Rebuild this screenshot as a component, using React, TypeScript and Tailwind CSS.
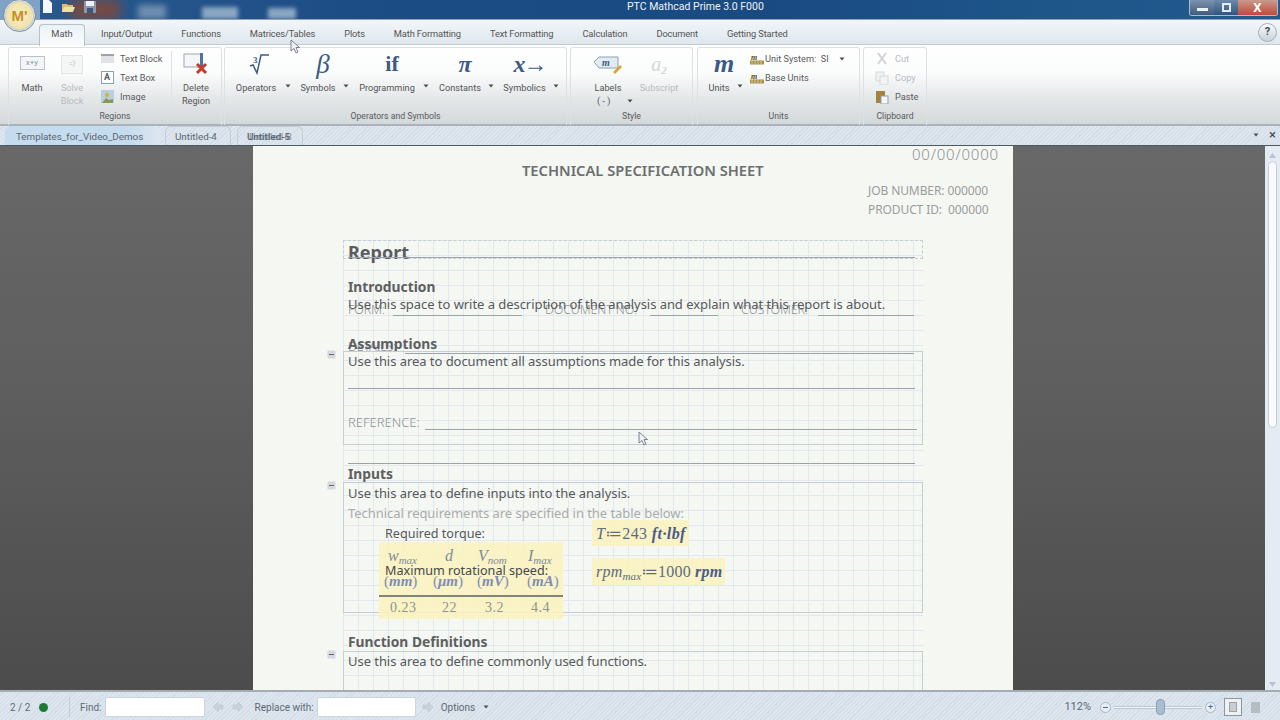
import React from "react";

const ui = "font-['Roboto','Liberation_Sans',sans-serif]";
const sheet = "font-['Noto_Sans','Open_Sans',sans-serif]";
const math = "font-['Liberation_Serif','DejaVu_Serif',serif]";
const hatch =
  "bg-[repeating-linear-gradient(135deg,#dde6ef_0px,#dde6ef_2px,#d3dde8_2px,#d3dde8_3px)]";

function Caret({ className = "" }: { className?: string }) {
  return (
    <svg width="6" height="4" viewBox="0 0 6 4" className={className}>
      <path d="M0.5 0.5h5L3 3.5z" fill="#4d4d4d" />
    </svg>
  );
}

function Group({ w, label, children, mr = "mr-[3px]" }: { w: string; label: string; children: React.ReactNode; mr?: string }) {
  return (
    <div className={`${w} ${mr} shrink-0 h-[78px] flex flex-col rounded-t-[3px] border border-b-0 border-[#dde1e4]`}>
      <div className="h-[58px] flex items-start">{children}</div>
      <div className="flex-1 flex items-center justify-center text-[8.7px] text-[#5a5a5a] pt-[2px]">{label}</div>
    </div>
  );
}

function Big({
  w,
  icon,
  label,
  faded,
}: {
  w: string;
  icon: React.ReactNode;
  label: string;
  faded?: boolean;
}) {
  return (
    <div className={`${w} shrink-0 flex flex-col items-center`}>
      <div className="h-[28px] mt-[2px] flex items-center justify-center">{icon}</div>
      <div className={`mt-[3px] text-[9.2px] leading-[13px] text-center flex items-center whitespace-pre-line ${faded ? "text-[#b9bcbd]" : "text-[#555]"}`}>
        {label}
      </div>
    </div>
  );
}

function Sm({ icon, label, faded }: { icon: React.ReactNode; label: string; faded?: boolean }) {
  return (
    <div className="h-[19px] flex items-center gap-[6px]">
      <span className="w-[14px] h-[14px] flex items-center justify-center">{icon}</span>
      <span className={`text-[9.2px] ${faded ? "text-[#b9bcbd]" : "text-[#5b5b5b]"}`}>{label}</span>
    </div>
  );
}

function Glyph({ children, cls }: { children: React.ReactNode; cls?: string }) {
  return <span className={`${math} italic font-bold text-[24px] leading-none text-[#3c5a86] ml-[10px] ${cls ?? ""}`}>{children}</span>;
}

function Slot({ w }: { w: string }) {
  return <div className={`${w} shrink-0 h-[14px] mt-[31px] flex items-center justify-center`}><Caret /></div>;
}

function UnitIcon() {
  return (
    <svg width="14" height="12" viewBox="0 0 14 12">
      <text x="1" y="7" fontSize="8" fontStyle="italic" fontWeight="700" fill="#5a4a20" fontFamily="Liberation Serif">m</text>
      <rect x="0" y="7.500" width="14" height="4" fill="#a8904e" />
      <path d="M2 8v3M5 8v3M8 8v3M11 8v3" stroke="#e4d6a4" strokeWidth="0.8" />
    </svg>
  );
}

function Arrow({ dir = "r", color = "#c9d2da" }: { dir?: "l" | "r"; color?: string }) {
  return (
    <svg width="12" height="12" viewBox="0 0 12 12">
      <path
        d={dir === "r" ? "M1 4h5V1l5 5-5 5V8H1z" : "M11 4H6V1L1 6l5 5V8h5z"}
        fill={color}
        stroke="#bcc6cf"
        strokeWidth="0.6"
      />
    </svg>
  );
}

function Cursor() {
  return (
    <svg width="10" height="15" viewBox="0 0 10 15">
      <path d="M1 1v11l3-2.500 2 4.500 2-1-2-4.500h3.500z" fill="#eef2f5" stroke="#667" strokeWidth="0.8" />
    </svg>
  );
}

function Rule({ x, y, w }: { x: number; y: number; w: number }) {
  return <div className="absolute h-px bg-[#98a3ab]" style={{ left: x, top: y, width: w }} />;
}

function T({ x, y, cls, children }: { x: number; y: number; cls: string; children: React.ReactNode }) {
  return (
    <div className={`absolute whitespace-nowrap leading-none ${cls}`} style={{ left: x, top: y }}>
      {children}
    </div>
  );
}

function Box({ x, y, w, h }: { x: number; y: number; w: number; h: number }) {
  return <div className="absolute border border-[#c5ced5]" style={{ left: x, top: y, width: w, height: h }} />;
}

function Fold({ y }: { y: number }) {
  return (
    <div
      className="absolute w-[9px] h-[9px] rounded-[2px] bg-[#d3d9dc] border border-[#e3e7ea] flex items-center justify-center"
      style={{ left: 327, top: y - 1 }}
    >
      <div className="w-[5px] h-px bg-[#666]" />
    </div>
  );
}

const body = "text-[13px] tracking-[-0.05px] text-[#56595a]";
const faint = "text-[12.500px] font-light tracking-[-0.15px] text-[#8f9293]";
const head = "text-[13.800px] font-bold text-[#5d6061]";

export default function App() {
  return (
    <div className={`relative w-[1280px] h-[720px] overflow-hidden flex flex-col bg-[#666] ${ui}`}>
      {/* Title bar */}
      <div className="relative h-[19px] shrink-0 overflow-hidden bg-[linear-gradient(90deg,#2a5a8f_0%,#1c4c84_30%,#1a4a82_60%,#1d5589_80%,#235a8f_100%)]">
        <div className="absolute left-[70px] top-0 w-[50px] h-[19px] bg-[#7b4a3e] blur-[6px]" />
        <div className="absolute left-[138px] top-[5px] w-[28px] h-[14px] bg-[#6f8fb0] blur-[3px]" />
        <div className="absolute left-[202px] top-[7px] w-[36px] h-[12px] bg-[#8aa7c3] blur-[2px]" />
        <div className="absolute left-[268px] top-[8px] w-[28px] h-[11px] bg-[#8aa7c3] blur-[2px]" />
        <div className="absolute left-0 top-0 w-[40px] h-[19px] bg-[#7ea3c6]" />
        <div className="absolute left-[627px] top-0 text-[10.5px] leading-[13px] text-[#eef3f8]">PTC Mathcad Prime 3.0 F000</div>
        <div className="absolute left-[42px] top-0 flex items-center gap-[9px]">
          <svg width="11" height="14" viewBox="0 0 11 14"><path d="M1 0h6l3 3v10H1z" fill="#f4f6f8" /></svg>
          <svg width="13" height="11" viewBox="0 0 13 11"><path d="M0 2h5l1 1h5v7H0z" fill="#d9bf74" /><path d="M2 5h11l-2 5H0z" fill="#efe0a6" /></svg>
          <svg width="12" height="12" viewBox="0 0 12 12"><rect width="12" height="12" rx="1" fill="#8a9ab0" /><rect x="2" y="0" width="8" height="5" fill="#eef1f4" /><rect x="3" y="7" width="6" height="5" fill="#41567a" /></svg>
        </div>
        <div className="absolute right-[2px] top-0 h-[16px] flex rounded-b-[3px] border border-t-0 border-[#a9bdd1] overflow-hidden">
          <div className="w-[24px] bg-[linear-gradient(#7c93ad,#3f5c7d)] flex items-center justify-center"><div className="w-[11px] h-[3px] mt-[3px] bg-[#eef2f6]" /></div>
          <div className="w-[24px] bg-[linear-gradient(#6d8aa8,#2f5680)] flex items-center justify-center">
            <div className="w-[9px] h-[9px] border-2 border-[#e5ebf1]" />
          </div>
          <div className="w-[39px] bg-[linear-gradient(#c99a8c,#c2483c)] flex items-center justify-center text-white text-[13px] font-bold leading-none">X</div>
        </div>
      </div>

      {/* Tab row */}
      <div className="relative h-[26px] shrink-0 pt-[3px] bg-[linear-gradient(#f2f6f9,#dfe7ed)] border-t border-[#93a3b1] border-b border-b-[#c3cbd1] flex items-center text-[9.300px] text-[#555]">
        <div className="absolute left-[39px] top-[4px] w-[46px] h-[22px] pb-[3px] rounded-t-[4px] border border-b-0 border-[#b6c2cb] bg-[linear-gradient(#eaf2f6,#fbfcfc)] flex items-center justify-center">Math</div>
        <div className="ml-[101px] flex gap-[29px] tracking-[-0.13px]">
          {["Input/Output", "Functions", "Matrices/Tables", "Plots", "Math Formatting", "Text Formatting", "Calculation", "Document", "Getting Started"].map((t) => (
            <span key={t}>{t}</span>
          ))}
        </div>
        <div className="ml-auto mr-[3px] mt-[-3px] w-[19px] h-[19px] rounded-full border border-[#a7b0b6] bg-[linear-gradient(#f8fafb,#c9d2d8)] flex items-center justify-center text-[11px] font-bold text-[#3d4a55]">?</div>
      </div>

      {/* Ribbon */}
      <div className="h-[81px] shrink-0 pt-[2px] pl-[8px] flex items-start bg-[linear-gradient(#ffffff_0%,#fbfcfc_35%,#e6e9ea_65%,#d3d8da_100%)] border-b-2 border-[#a9b3ba]">
        <Group w="w-[214px]" label="Regions" mr="mr-[2px]">
          <Big
            w="w-[46px]"
            label="Math"
            icon={
              <div className="w-[25px] h-[14px] mt-[-2px] border border-[#b6c1cc] bg-[#f3f6f8] text-[8px] text-[#8c97a1] flex items-center justify-center">x+y</div>
            }
          />
          <Big
            w="w-[34px]"
            faded
            label={"Solve\nBlock"}
            icon={<div className="w-[22px] h-[19px] border border-[#e1e5e7] bg-[#f5f6f6] text-[8px] text-[#c2c6c8] flex items-center justify-center">{"=}"}</div>}
          />
          <div className="ml-[11px] w-[71px] pt-[1px] flex flex-col">
            <Sm label="Text Block" icon={<div className="w-[13px] h-[9px] bg-[#dfe3e6] border-t-2 border-[#9aa4ac]" />} />
            <Sm label="Text Box" icon={<div className="w-[13px] h-[13px] border border-[#8da0b0] bg-white text-[9px] font-bold text-[#55606a] flex items-center justify-center leading-none">A</div>} />
            <Sm label="Image" icon={<svg width="13" height="13" viewBox="0 0 13 13"><rect width="13" height="13" fill="#b7cfe0" /><circle cx="6" cy="5" r="2.200" fill="#d7b04e" /><path d="M1 13l4-5 3 2 4-1v4z" fill="#879a55" /></svg>} />
          </div>
          <div className="w-px h-[52px] mt-[3px] bg-[#dfe3e5]" />
          <Big
            w="w-[48px]"
            label={"Delete\nRegion"}
            icon={
              <svg width="26" height="24" viewBox="0 0 26 24" className="mt-[-1px]">
                <rect x="1" y="2" width="17" height="13" fill="#f4f6f8" stroke="#9aa6b0" />
                <path d="M17 1h3v14h-3z" fill="#4b74a6" />
                <path d="M14 12l9 9M23 12l-9 9" stroke="#c8392b" strokeWidth="3" />
              </svg>
            }
          />
        </Group>

        <Group w="w-[343px]" label="Operators and Symbols">
          <div className="pl-[11px] flex items-start">
            <Big
              w="w-[40px]"
              label="Operators"
              icon={
                <svg width="24" height="22" viewBox="0 0 24 22" className="ml-[8px]">
                  <path d="M2 13l3-1 4 8 4-18h8" fill="none" stroke="#3c5a86" strokeWidth="1.500" />
                  <text x="5" y="10" fontSize="9" fontWeight="700" fill="#3c5a86" fontFamily="Liberation Serif">3</text>
                </svg>
              }
            />
            <Slot w="w-[24px]" />
            <Big w="w-[36px]" label="Symbols" icon={<Glyph cls="font-normal! text-[27px]">β</Glyph>} />
            <Slot w="w-[20px]" />
            <Big w="w-[62px]" label="Programming" icon={<span className={`${math} font-bold text-[22px] leading-none text-[#3c5a86] ml-[10px]`}>if</span>} />
            <Slot w="w-[16px]" />
            <Big w="w-[52px]" label="Constants" icon={<Glyph>π</Glyph>} />
            <Slot w="w-[10px]" />
            <Big w="w-[57px]" label="Symbolics" icon={<Glyph cls="text-[22px] tracking-[-2px]">x→</Glyph>} />
            <Slot w="w-[6px]" />
          </div>
        </Group>

        <Group w="w-[123px]" label="Style" mr="mr-[4px]">
          <div className="flex items-start pl-[12px]">
            <div className="w-[50px] shrink-0 flex flex-col items-center">
              <div className="h-[28px] mt-[2px] flex items-center">
                <svg width="30" height="22" viewBox="0 0 30 22" className="mt-[2px]">
                  <path d="M1 8l5-5h19v11H6z" fill="#e3eaf0" stroke="#8ba0b3" />
                  <text x="9" y="12" fontSize="10" fontStyle="italic" fontWeight="700" fill="#3c5a86" fontFamily="Liberation Serif">m</text>
                  <path d="M20 18l7-7 2 2-7 7z" fill="#d7a53a" />
                </svg>
              </div>
              <div className="mt-[3px] text-[9.200px] leading-[13px] text-[#555]">Labels</div>
              <div className="self-start ml-[14px] text-[9.200px] leading-[13px] text-[#555] flex items-center gap-[17px] whitespace-nowrap">( - )<Caret /></div>
            </div>
            <Big w="w-[52px]" faded label="Subscript" icon={<span className={`${math} italic text-[20px] leading-none text-[#d3d6d8]`}>a<sub className="text-[11px] font-bold">2</sub></span>} />
          </div>
        </Group>

        <Group w="w-[163px]" label="Units">
          <div className="flex items-start pl-[9px]">
            <Big w="w-[24px]" label="Units" icon={<Glyph cls="text-[26px]">m</Glyph>} />
            <Slot w="w-[18px]" />
            <div className="ml-[1px] w-[97px] pt-[1px] flex flex-col text-[9.200px] text-[#5b5b5b]">
              <div className="h-[19px] flex items-center gap-[1px]"><UnitIcon /><span>Unit System:&nbsp; SI</span><Caret className="ml-auto mr-[2px]" /></div>
              <div className="h-[19px] flex items-center gap-[1px]"><UnitIcon /><span>Base Units</span></div>
            </div>
          </div>
        </Group>

        <Group w="w-[64px]" label="Clipboard">
          <div className="pl-[11px] pt-[1px] flex flex-col">
            <Sm faded label="Cut" icon={<svg width="14" height="14" viewBox="0 0 14 14"><path d="M3 1l8 11M11 1L3 12" stroke="#cfd3d6" strokeWidth="2" /></svg>} />
            <Sm faded label="Copy" icon={<svg width="14" height="14" viewBox="0 0 14 14"><rect x="1" y="1" width="8" height="9" fill="#f2f3f4" stroke="#d5d8da" /><rect x="5" y="5" width="8" height="9" fill="#f2f3f4" stroke="#d5d8da" /></svg>} />
            <Sm label="Paste" icon={<svg width="14" height="14" viewBox="0 0 14 14"><rect x="1" y="1" width="9" height="12" fill="#a5823d" /><rect x="6" y="6" width="7" height="8" fill="#f5f6f7" stroke="#8da0b0" /></svg>} />
          </div>
        </Group>
      </div>

      {/* Document tab bar */}
      <div className={`h-[19px] shrink-0 relative text-[9.800px] leading-[12px] text-[#5b6670] ${hatch}`}>
        <div className="absolute left-[5px] top-0 w-[155px] h-[19px] rounded-t-[6px] bg-[linear-gradient(90deg,#c5dcee,#c5dcee_80%,#dde6ef)]" />
        <div className="absolute left-[165px] top-0 w-[66px] h-[19px] rounded-t-[6px] border border-b-0 border-[#c6ced5]" />
        <div className="absolute left-[237px] top-0 w-[66px] h-[19px] rounded-t-[6px] border border-b-0 border-[#c6ced5]" />
        <span className="absolute left-[16px] top-[5px]">Templates_for_Video_Demos</span>
        <span className="absolute left-[175px] top-[5px]">Untitled-4</span>
        <span className="absolute left-[247px] top-[5px] font-medium">Untitled-5</span>
        <span className="absolute left-[249px] top-[5px] font-medium opacity-50">Untitled-8</span>
        <Caret className="absolute right-[21px] top-[7px]" />
        <span className="absolute right-[4px] top-[1px] text-[13px] leading-[15px] text-[#444]">×</span>
      </div>

      {/* Work area */}
      <div className="flex-1 min-h-0 flex bg-[linear-gradient(#686868,#5e5e5e_45%,#4c4c4c)] border-t border-[#4d5a63]">
        <div className="flex-1 min-w-0 relative overflow-hidden">
          <div className="absolute left-[253px] top-0 w-[760px] h-[545px] bg-[#f5f7f3]">
            <div className="absolute left-[90px] top-[94px] w-[580px] h-[451px] bg-[linear-gradient(to_right,#e2e9ee_1px,transparent_1px),linear-gradient(to_bottom,#e2e9ee_1px,transparent_1px)] bg-[size:15px_15px]" />
          </div>
          <div className={`absolute inset-0 ${sheet}`}>
            <T x={522} y={17} cls="text-[14.700px] font-semibold text-[#6b6f70]">TECHNICAL SPECIFICATION SHEET</T>
            <T x={912} y={1} cls="text-[15px] font-light tracking-[0.8px] text-[#8d9091]">00/00/0000</T>
            <T x={868} y={39} cls="text-[12px] tracking-[-0.1px] text-[#9a9d9e]">JOB NUMBER: 000000</T>
            <T x={868} y={58} cls="text-[12px] tracking-[-0.1px] text-[#9a9d9e]">PRODUCT ID:&nbsp; 000000</T>

            <div className="absolute left-[343px] top-[94px] w-[580px] h-[19px] border border-dashed border-[#c5ced5]" />
            <T x={348} y={97} cls="text-[18px] font-bold text-[#5a5d5e]">Report</T>
            <Rule x={348} y={111} w={567} />

            <T x={348} y={134} cls={head}>Introduction</T>
            <T x={348} y={158} cls={faint}>FORM:</T>
            <Rule x={393} y={169} w={129} />
            <T x={545} y={158} cls={faint}>DOCUMENT NO:</T>
            <Rule x={650} y={169} w={68} />
            <T x={741} y={158} cls={faint}>CUSTOMER:</T>
            <Rule x={818} y={169} w={96} />
            <T x={348} y={152} cls={body}>Use this space to write a description of the analysis and explain what this report is about.</T>

            <T x={348} y={195} cls={faint}>DETAILS:</T>
            <T x={348} y={191} cls={head}>Assumptions</T>
            <Rule x={405} y={207} w={509} />
            <Fold y={205} />
            <Box x={343} y={205} w={580} h={94} />
            <T x={348} y={209} cls={body}>Use this area to document all assumptions made for this analysis.</T>
            <Rule x={348} y={242} w={567} />
            <T x={348} y={270} cls="text-[13px] font-light text-[#8f9293]">REFERENCE:</T>
            <Rule x={425} y={283} w={492} />
            <div className="absolute left-[638px] top-[285px]"><Cursor /></div>
            <Rule x={348} y={317} w={567} />

            <T x={348} y={321} cls={head}>Inputs</T>
            <Fold y={336} />
            <Box x={343} y={336} w={580} h={131} />
            <T x={348} y={341} cls={body}>Use this area to define inputs into the analysis.</T>
            <T x={348} y={361} cls="text-[13px] tracking-[-0.05px] text-[#a9acad]">Technical requirements are specified in the table below:</T>

            <div className="absolute left-[379px] top-[396px] w-[184px] h-[77px] bg-[#faf2c0]/90" />
            <div className="absolute left-[592px] top-[374px] w-[97px] h-[26px] bg-[#faf2c0]/90" />
            <div className="absolute left-[592px] top-[412px] w-[133px] h-[27px] bg-[#faf2c0]/90" />
            <T x={385} y={382} cls="text-[12.600px] text-[#56595a]">Required torque:</T>

            <div className={math}>
              <T x={388} y={402} cls="italic text-[16px] text-[#7d8a9c]">w<sub className="text-[11px]">max</sub></T>
              <T x={445} y={402} cls="italic text-[16px] text-[#7d8a9c]">d</T>
              <T x={478} y={402} cls="italic text-[16px] text-[#7d8a9c]">V<sub className="text-[11px]">nom</sub></T>
              <T x={528} y={402} cls="italic text-[16px] text-[#7d8a9c]">I<sub className="text-[11px]">max</sub></T>
              <T x={384} y={428} cls="italic font-bold text-[15px] text-[#7f8db5]"><span className="not-italic font-normal">(</span>mm<span className="not-italic font-normal">)</span></T>
              <T x={433} y={428} cls="italic font-bold text-[15px] text-[#7f8db5]"><span className="not-italic font-normal">(</span>μm<span className="not-italic font-normal">)</span></T>
              <T x={477} y={428} cls="italic font-bold text-[15px] text-[#7f8db5]"><span className="not-italic font-normal">(</span>mV<span className="not-italic font-normal">)</span></T>
              <T x={527} y={428} cls="italic font-bold text-[15px] text-[#7f8db5]"><span className="not-italic font-normal">(</span>mA<span className="not-italic font-normal">)</span></T>
              <div className="absolute left-[379px] top-[449px] w-[184px] h-[2px] bg-[#80857c]" />
              <T x={390} y={455} cls="text-[14px] tracking-[0.5px] text-[#8f948e]">0.23</T>
              <T x={442} y={455} cls="text-[14px] tracking-[0.5px] text-[#8f948e]">22</T>
              <T x={485} y={455} cls="text-[14px] tracking-[0.5px] text-[#8f948e]">3.2</T>
              <T x={531} y={455} cls="text-[14px] tracking-[0.5px] text-[#8f948e]">4.4</T>
              <T x={596} y={380} cls="italic text-[16px] tracking-[0.4px] text-[#5e6b80]">T<span className="not-italic">≔243</span> <b className="text-[#4a5d8a]">ft·lbf</b></T>
              <T x={596} y={418} cls="italic text-[16px] tracking-[0.2px] text-[#5e6b80]">rpm<sub className="text-[11px]">max</sub><span className="not-italic">≔1000</span> <b className="text-[#4a5d8a]">rpm</b></T>
            </div>
            <T x={385} y={419} cls="text-[12.600px] text-[#45484a]">Maximum rotational speed:</T>

            <T x={348} y={489} cls={head}>Function Definitions</T>
            <Fold y={505} />
            <Box x={343} y={505} w={580} h={60} />
            <T x={348} y={509} cls={body}>Use this area to define commonly used functions.</T>
          </div>
        </div>

        {/* Scrollbar */}
        <div className="w-[15px] shrink-0 bg-[#e4ebf3] flex flex-col items-center">
          <svg width="7" height="5" viewBox="0 0 7 5" className="mt-[7px]"><path d="M3.500 0L7 5H0z" fill="#b7c2cc" /></svg>
          <div className="mt-[3px] w-[9px] h-[267px] rounded-[5px] border border-[#c3ced8] bg-[#f8fafc]" />
          <svg width="7" height="5" viewBox="0 0 7 5" className="mt-auto mb-[3px]"><path d="M0 0h7L3.500 5z" fill="#b7c2cc" /></svg>
        </div>
      </div>

      {/* Status bar */}
      <div className={`h-[30px] shrink-0 pt-[2px] flex items-center text-[10px] text-[#5f6973] border-t-2 border-[#a5adb3] ${hatch}`}>
        <span className="ml-[10px] w-[20px] whitespace-nowrap">2 / 2</span>
        <div className="ml-[9px] w-[9px] h-[9px] rounded-full bg-[#1f7a35]" />
        <div className="ml-[21px] w-px h-[20px] bg-[#c2cbd3]" />
        <span className="ml-[10px]">Find:</span>
        <div className="ml-[3px] w-[100px] h-[20px] rounded-[2px] bg-white border border-[#ccd5dd]" />
        <div className="ml-[7px] flex gap-[8px]"><Arrow dir="l" /><Arrow /></div>
        <span className="ml-[11px]">Replace with:</span>
        <div className="ml-[3px] w-[99px] h-[20px] rounded-[2px] bg-white border border-[#ccd5dd]" />
        <div className="ml-[6px]"><Arrow /></div>
        <span className="ml-[7px]">Options</span>
        <Caret className="ml-[8px]" />
        <span className="ml-auto text-[11px]">112%</span>
        <div className="ml-[9px] w-[11px] h-[11px] rounded-full bg-[#e7eef5] border border-[#a9b9c9] flex items-center justify-center"><div className="w-[5px] h-px bg-[#4a6b93]" /></div>
        <div className="relative ml-[3px] w-[88px] h-[3px] bg-[#f5f8fa] border-y border-[#bcc6cf]">
          <div className="absolute left-[42px] top-[-8px] w-[9px] h-[16px] rounded-[4px] bg-[#a9bdd2] border border-[#8ea2b7]" />
        </div>
        <div className="ml-[3px] w-[11px] h-[11px] rounded-full bg-[#e7eef5] border border-[#a9b9c9] flex items-center justify-center text-[9px] leading-none text-[#4a6b93]">+</div>
        <div className="ml-[8px] w-[18px] h-[18px] bg-[#eef2f5] border border-[#8d979f] flex items-center justify-center"><div className="w-[8px] h-[10px] bg-[#c9ced3] border border-[#9aa2a9]" /></div>
        <div className="ml-[5px] w-[16px] h-[16px] flex items-center justify-center"><div className="w-[9px] h-[11px] bg-[#b5bcc2]" /></div>
        <div className="w-[17px]" />
      </div>

      <div className="absolute left-[3px] top-[-1px] w-[33px] h-[33px] rounded-full bg-[radial-gradient(circle,#f8efc7_0%,#efe2a9_60%,#c9cfd2_62%,#eef1f3_80%,#8a97a3_100%)] border border-[#7f8d99] flex items-center justify-center">
        <span className="text-[#c69023] font-bold text-[15px] leading-none font-['Liberation_Sans',sans-serif]">M'</span>
      </div>
      <div className="absolute left-[290px] top-[39px]"><Cursor /></div>
    </div>
  );
}
